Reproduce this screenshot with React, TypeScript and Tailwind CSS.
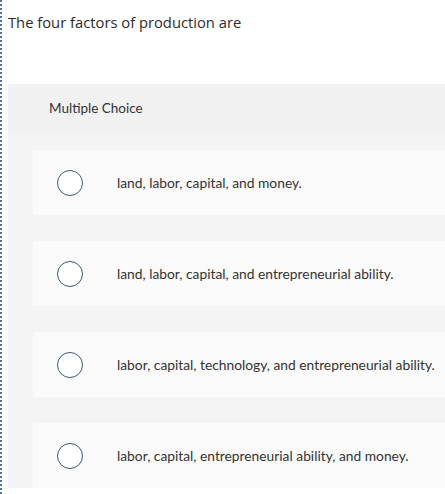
import React from 'react';

const options = [
  'land, labor, capital, and money.',
  'land, labor, capital, and entrepreneurial ability.',
  'labor, capital, technology, and entrepreneurial ability.',
  'labor, capital, entrepreneurial ability, and money.',
];

const Radio: React.FC = () => (
  <span className="block w-[26px] h-[26px] rounded-full border-[1.5px] border-[#3e5876] bg-white shrink-0" />
);

export default function App() {
  return (
    <div className="h-[494px] w-[445px] overflow-hidden bg-white border-l-2 border-dotted border-[#4f72a8] font-['Lato','Open_Sans',sans-serif]">
      {/* Question */}
      <p className="pl-[6px] pt-[12px] text-[14.75px] leading-[20px] text-[#2b2b2b] font-['Open_Sans',sans-serif]">
        The four factors of production are
      </p>

      {/* Answer panel */}
      <div className="mt-[52px] ml-[6px] bg-[#f4f4f4]">
        <div className="h-[49px] bg-[#f1f1f1] pl-[41px] flex items-center text-[13.5px] text-[#333]">
          Multiple Choice
        </div>
        <div className="pl-[25px] pt-[17px] flex flex-col gap-[26px]">
          {options.map((opt) => (
            <label
              key={opt}
              className="h-[65px] bg-[#fafafa] flex items-center pl-[24px] cursor-pointer"
            >
              <Radio />
              <span className="ml-[34px] pt-[2px] text-[13.8px] text-[#333]">{opt}</span>
            </label>
          ))}
        </div>
      </div>
    </div>
  );
}
